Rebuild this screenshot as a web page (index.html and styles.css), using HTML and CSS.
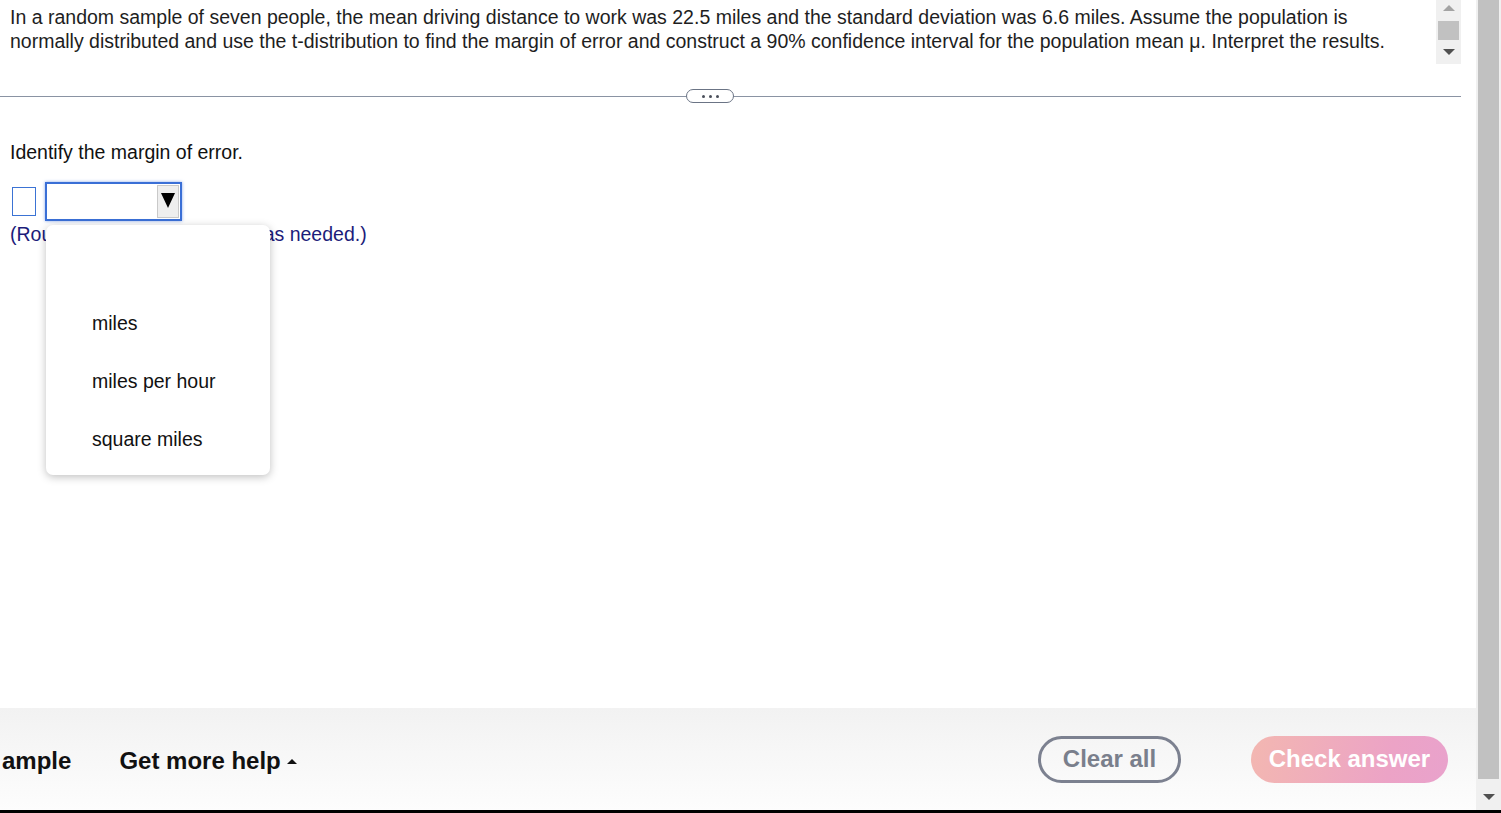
FILE: index.html
```html
<!DOCTYPE html>
<html>
<head>
<meta charset="utf-8">
<link rel="stylesheet" href="styles.css">
</head>
<body>
<div class="screen">
  <div class="main">
    <div class="content">
      <div class="question">
        <p class="qtext">In a random sample of seven people, the mean driving distance to work was 22.5 miles and the standard deviation was 6.6 miles. Assume the population is normally distributed and use the t-distribution to find the margin of error and construct a 90% confidence interval for the population mean μ. Interpret the results.</p>
        <div class="qscroll">
          <span class="arrow-up light"></span>
          <span class="qthumb"></span>
          <span class="arrow-down dark"></span>
        </div>
      </div>
      <div class="divider">
        <span class="pill"><i></i><i></i><i></i></span>
      </div>
      <div class="part">
        <p class="prompt">Identify the margin of error.</p>
        <div class="answer-row">
          <span class="numbox"></span>
          <span class="select"><span class="selbtn"><svg width="14" height="15" viewBox="0 0 14 15"><polygon points="0,0 14,0 7,15" fill="#000"/></svg></span></span>
        </div>
        <p class="hint">(Round to one decimal place as needed.)</p>
        <ul class="menu">
          <li class="blank">&nbsp;</li>
          <li>miles</li>
          <li>miles per hour</li>
          <li>square miles</li>
        </ul>
      </div>
      <div class="footer">
        <span class="flink cut">ample</span>
        <span class="flink">Get more help <span class="caret"></span></span>
        <span class="spacer"></span>
        <span class="btn clear">Clear all</span>
        <span class="btn check">Check answer</span>
      </div>
    </div>
    <div class="vscroll">
      <span class="vthumb"></span>
      <span class="arrow-down dark"></span>
    </div>
  </div>
  <div class="blackbar"></div>
</div>
</body>
</html>
```

FILE: styles.css
```css
* { box-sizing: border-box; }
html, body { margin: 0; padding: 0; background: #fff; }
body { font-family: "Liberation Sans", Arial, sans-serif; color: #222; }
.screen { width: 1501px; height: 813px; display: flex; flex-direction: column; overflow: hidden; }
.main { flex: 1; display: flex; min-height: 0; }
.content { width: 1476px; display: flex; flex-direction: column; position: relative; }
.question { display: flex; width: 1461px; height: 64px; }
.qtext { flex: 1; margin: 0; padding: 5px 44px 0 10px; font-size: 19.5px; line-height: 24px; color: #1e1e1e; }
.qscroll { width: 25px; height: 64px; background: #f0f0f0; display: flex; flex-direction: column; align-items: center; }
.arrow-up { width: 0; height: 0; border-left: 6px solid transparent; border-right: 6px solid transparent; border-bottom: 6px solid #a3a3a3; margin-top: 5px; }
.qthumb { width: 21px; height: 19px; background: #c1c1c1; margin-top: 10px; }
.arrow-down { width: 0; height: 0; border-left: 6px solid transparent; border-right: 6px solid transparent; border-top: 6px solid #505050; }
.qscroll .arrow-down { margin-top: 9px; }
.divider { width: 1461px; height: 1px; background: #8a93a3; margin-top: 32px; position: relative; }
.pill { position: absolute; left: 686px; top: -7px; width: 48px; height: 14px; border: 1px solid #6b7485; border-radius: 7px; background: #fff; display: flex; justify-content: center; align-items: center; gap: 4px; }
.pill i { width: 3px; height: 3px; background: #4a4f5a; border-radius: 50%; display: block; }
.part { position: relative; padding-left: 10px; }
.prompt { margin: 43px 0 0; font-size: 19.5px; line-height: 24px; color: #111; }
.answer-row { display: flex; align-items: center; margin-top: 18px; gap: 9px; padding-left: 2px; }
.numbox { width: 24px; height: 29px; border: 1px solid #3b73d4; }
.select { width: 137px; height: 39px; border: 2px solid #3a6fd6; box-shadow: 0 0 3px rgba(60,110,220,0.6); display: flex; justify-content: flex-end; align-items: center; padding-right: 1px; }
.selbtn { width: 22px; height: 33px; background: #eeeeee; border: 1px solid #c9c9c9; display: flex; align-items: center; justify-content: center; }
.selbtn svg { display: block; margin-top: -2px; }
.hint { margin: 1px 0 0; font-size: 19.5px; line-height: 24px; color: #1c1c7a; }
.menu { position: absolute; left: 46px; top: 128px; width: 224px; height: 250px; margin: 0; padding: 17px 0 0 46px; list-style: none; background: #fff; border-radius: 7px; box-shadow: 0 2px 8px rgba(0,0,0,0.25); }
.menu li { height: 58px; line-height: 46px; font-size: 19.5px; color: #111; }
.footer { margin-top: auto; height: 102px; background: linear-gradient(#f2f2f2, #fdfdfd); display: flex; align-items: center; padding: 4px 28px 0 2px; }
.flink { font-size: 24px; font-weight: bold; color: #111; display: flex; align-items: center; }
.flink.cut { margin-right: 48px; }
.caret { width: 0; height: 0; border-left: 5px solid transparent; border-right: 5px solid transparent; border-bottom: 5px solid #111; margin-left: 6px; }
.spacer { flex: 1; }
.btn { height: 47px; border-radius: 24px; display: flex; align-items: center; justify-content: center; font-size: 24px; font-weight: bold; margin-top: -4px; }
.clear { width: 143px; border: 3px solid #7c8190; color: #7a7f8c; margin-right: 70px; }
.check { width: 197px; background: linear-gradient(100deg, #f3b7b1, #eca3c6 70%, #e9a2cc); color: #fff; }
.vscroll { width: 25px; background: #f0f0f0; display: flex; flex-direction: column; align-items: center; }
.vthumb { width: 21px; height: 779px; background: #c1c1c1; }
.vscroll .arrow-down { margin-top: 15px; }
.blackbar { height: 3px; background: #000; }
```
